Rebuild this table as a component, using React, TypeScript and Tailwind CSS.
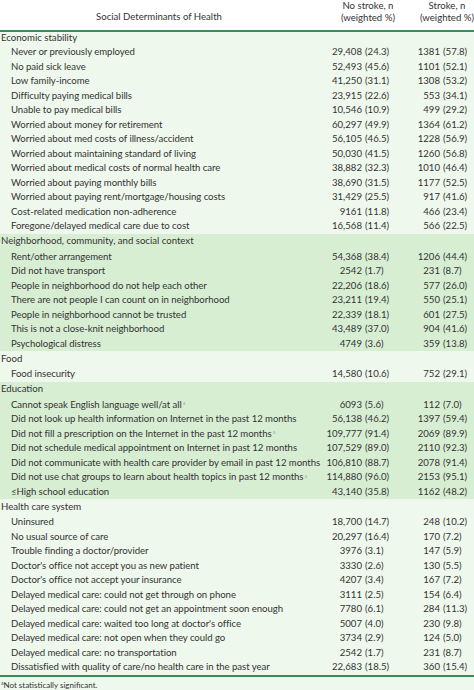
import React from "react";

type Row = { label: string; a: [string, string]; b: [string, string]; note?: boolean };
type Section = { title: string; dark: boolean; rows: Row[] };

const sections: Section[] = [
  {
    title: "Economic stability",
    dark: false,
    rows: [
      { label: "Never or previously employed", a: ["29,408", "(24.3)"], b: ["1381", "(57.8)"] },
      { label: "No paid sick leave", a: ["52,493", "(45.6)"], b: ["1101", "(52.1)"] },
      { label: "Low family-income", a: ["41,250", "(31.1)"], b: ["1308", "(53.2)"] },
      { label: "Difficulty paying medical bills", a: ["23,915", "(22.6)"], b: ["553", "(34.1)"] },
      { label: "Unable to pay medical bills", a: ["10,546", "(10.9)"], b: ["499", "(29.2)"] },
      { label: "Worried about money for retirement", a: ["60,297", "(49.9)"], b: ["1364", "(61.2)"] },
      { label: "Worried about med costs of illness/accident", a: ["56,105", "(46.5)"], b: ["1228", "(56.9)"] },
      { label: "Worried about maintaining standard of living", a: ["50,030", "(41.5)"], b: ["1260", "(56.8)"] },
      { label: "Worried about medical costs of normal health care", a: ["38,882", "(32.3)"], b: ["1010", "(46.4)"] },
      { label: "Worried about paying monthly bills", a: ["38,690", "(31.5)"], b: ["1177", "(52.5)"] },
      { label: "Worried about paying rent/mortgage/housing costs", a: ["31,429", "(25.5)"], b: ["917", "(41.6)"] },
      { label: "Cost-related medication non-adherence", a: ["9161", "(11.8)"], b: ["466", "(23.4)"] },
      { label: "Foregone/delayed medical care due to cost", a: ["16,568", "(11.4)"], b: ["566", "(22.5)"] },
    ],
  },
  {
    title: "Neighborhood, community, and social context",
    dark: true,
    rows: [
      { label: "Rent/other arrangement", a: ["54,368", "(38.4)"], b: ["1206", "(44.4)"] },
      { label: "Did not have transport", a: ["2542", "(1.7)"], b: ["231", "(8.7)"] },
      { label: "People in neighborhood do not help each other", a: ["22,206", "(18.6)"], b: ["577", "(26.0)"] },
      { label: "There are not people I can count on in neighborhood", a: ["23,211", "(19.4)"], b: ["550", "(25.1)"] },
      { label: "People in neighborhood cannot be trusted", a: ["22,339", "(18.1)"], b: ["601", "(27.5)"] },
      { label: "This is not a close-knit neighborhood", a: ["43,489", "(37.0)"], b: ["904", "(41.6)"] },
      { label: "Psychological distress", a: ["4749", "(3.6)"], b: ["359", "(13.8)"] },
    ],
  },
  {
    title: "Food",
    dark: false,
    rows: [{ label: "Food insecurity", a: ["14,580", "(10.6)"], b: ["752", "(29.1)"] }],
  },
  {
    title: "Education",
    dark: true,
    rows: [
      { label: "Cannot speak English language well/at all", a: ["6093", "(5.6)"], b: ["112", "(7.0)"], note: true },
      { label: "Did not look up health information on Internet in the past 12 months", a: ["56,138", "(46.2)"], b: ["1397", "(59.4)"] },
      { label: "Did not fill a prescription on the Internet in the past 12 months", a: ["109,777", "(91.4)"], b: ["2069", "(89.9)"], note: true },
      { label: "Did not schedule medical appointment on Internet in past 12 months", a: ["107,529", "(89.0)"], b: ["2110", "(92.3)"] },
      { label: "Did not communicate with health care provider by email in past 12 months", a: ["106,810", "(88.7)"], b: ["2078", "(91.4)"] },
      { label: "Did not use chat groups to learn about health topics in past 12 months", a: ["114,880", "(96.0)"], b: ["2153", "(95.1)"], note: true },
      { label: "≤High school education", a: ["43,140", "(35.8)"], b: ["1162", "(48.2)"] },
    ],
  },
  {
    title: "Health care system",
    dark: false,
    rows: [
      { label: "Uninsured", a: ["18,700", "(14.7)"], b: ["248", "(10.2)"] },
      { label: "No usual source of care", a: ["20,297", "(16.4)"], b: ["170", "(7.2)"] },
      { label: "Trouble finding a doctor/provider", a: ["3976", "(3.1)"], b: ["147", "(5.9)"] },
      { label: "Doctor's office not accept you as new patient", a: ["3330", "(2.6)"], b: ["130", "(5.5)"] },
      { label: "Doctor's office not accept your insurance", a: ["4207", "(3.4)"], b: ["167", "(7.2)"] },
      { label: "Delayed medical care: could not get through on phone", a: ["3111", "(2.5)"], b: ["154", "(6.4)"] },
      { label: "Delayed medical care: could not get an appointment soon enough", a: ["7780", "(6.1)"], b: ["284", "(11.3)"] },
      { label: "Delayed medical care: waited too long at doctor's office", a: ["5007", "(4.0)"], b: ["230", "(9.8)"] },
      { label: "Delayed medical care: not open when they could go", a: ["3734", "(2.9)"], b: ["124", "(5.0)"] },
      { label: "Delayed medical care: no transportation", a: ["2542", "(1.7)"], b: ["231", "(8.7)"] },
      { label: "Dissatisfied with quality of care/no health care in the past year", a: ["22,683", "(18.5)"], b: ["360", "(15.4)"] },
    ],
  },
];

const Value = ({ v, numW }: { v: [string, string]; numW: string }) => (
  <div className="flex">
    <span className={`${numW} text-right`}>{v[0]}</span>
    <span className="pl-[3px]">{v[1]}</span>
  </div>
);

export default function App() {
  return (
    <div
      className="w-[474px] h-[690px] overflow-hidden bg-white text-[#333333] text-[9.6px]"
      style={{ fontFamily: "Lato, 'Liberation Sans', sans-serif" }}
    >
      {/* header */}
      <div className="flex h-[30px] leading-[12px] bg-white">
        <div className="w-[318px] flex items-end justify-center pb-[7px]">Social Determinants of Health</div>
        <div className="w-[100px] flex flex-col items-center">
          <span>No stroke, n</span>
          <span>(weighted %)</span>
        </div>
        <div className="flex-1 flex flex-col items-center pl-[2px]">
          <span>Stroke, n</span>
          <span className="whitespace-nowrap">(weighted %)</span>
        </div>
      </div>
      <div className="h-[2px] bg-[#3f8a5a]" />

      {sections.map((s, i) => (
        <div key={s.title} className={s.dark ? "bg-[#d8eed3]" : "bg-[#eff8ec]"}>
          <div className={`${i === 0 ? "h-[13px]" : "h-[16px]"} flex items-center pl-[1px]`}>{s.title}</div>
          {s.rows.map((r) => (
            <div key={r.label} className="h-[14.5px] flex items-center">
              <div className="w-[322px] pl-[11px] whitespace-nowrap tracking-[-0.05px]">
                {r.label}
                {r.note && <sup className="text-[5px] text-[#9aa89a] ml-[1px]">a</sup>}
              </div>
              <div className="w-[80px]">
                <Value v={r.a} numW="w-[40px]" />
              </div>
              <div className="flex-1 pl-[1px]">
                <Value v={r.b} numW="w-[37px]" />
              </div>
            </div>
          ))}
        </div>
      ))}

      <div className="h-[2px] bg-[#3f8a5a]" />
      <div className="bg-[#eff8ec] h-[20px] text-[8px] pl-[1px] pt-[2px]">
        <sup className="text-[5px]">a</sup>Not statistically significant.
      </div>
    </div>
  );
}
